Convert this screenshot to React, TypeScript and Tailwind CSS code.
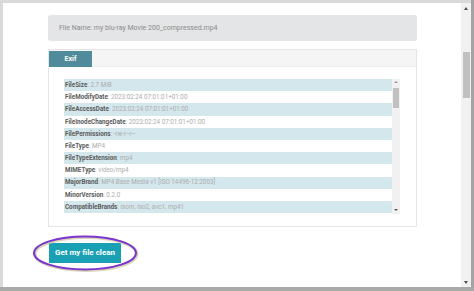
import React from "react";

const rows: [string, string][] = [
  ["FileSize", "2.7 MiB"],
  ["FileModifyDate", "2023:02:24 07:01:01+01:00"],
  ["FileAccessDate", "2023:02:24 07:01:01+01:00"],
  ["FileInodeChangeDate", "2023:02:24 07:01:01+01:00"],
  ["FilePermissions", "-rw-r--r--"],
  ["FileType", "MP4"],
  ["FileTypeExtension", "mp4"],
  ["MIMEType", "video/mp4"],
  ["MajorBrand", "MP4 Base Media v1 [ISO 14496-12:2003]"],
  ["MinorVersion", "0.2.0"],
  ["CompatibleBrands", "isom, iso2, avc1, mp41"],
];

export default function App() {
  return (
    <div
      className="w-[474px] h-[291px] overflow-hidden flex flex-col bg-[#d9d9d9]"
      style={{ fontFamily: "Roboto, 'Liberation Sans', sans-serif" }}
    >
      <div className="flex flex-1 min-h-0 pt-[3px] pl-[3px] border-r-[3px] border-r-[#a3a3a3]">
        {/* page area */}
        <div className="flex-1 bg-white pl-[45px] pt-[12px] flex flex-col">
          <div className="w-[369px] h-[26px] rounded-[3px] bg-[#e4e5e7] flex items-center pl-[11px] text-[7px] text-[#8a8a8a]">
            File Name: my blu-ray Movie 200_compressed.mp4
          </div>
          <div className="mt-[8px] w-[369px] h-[178px] border border-[#e6e6e6] flex flex-col">
            <div className="h-[17px] bg-[#f5f5f5] border-b border-[#ececec] flex">
              <div className="w-[43px] h-[16px] mt-[1px] bg-[#4f8b9b] text-white text-[7px] font-bold flex items-center justify-center">
                Exif
              </div>
            </div>
            <div className="flex-1 pt-[12px] pl-[15px] pr-[16px]">
              <div className="flex h-[135px]">
                <div className="flex-1 flex flex-col">
                  {rows.map(([k, v], i) => (
                    <div
                      key={k}
                      className={`h-[12.2px] flex items-center pl-[1px] text-[6.3px] leading-none ${
                        i % 2 === 0 ? "bg-[#d4e7ec]" : "bg-white"
                      }`}
                    >
                      <span className="font-bold text-[#5a5a5a]">{k}</span>
                      <span className="text-[#acacac]">: {v}</span>
                    </div>
                  ))}
                </div>
                <div className="w-[8px] bg-[#f1f1f1] flex flex-col items-center">
                  <div className="mt-[2px] w-0 h-0 border-l-[2px] border-r-[2px] border-b-[2px] border-l-transparent border-r-transparent border-b-[#999]" />
                  <div className="mt-[5px] w-[6px] h-[20px] bg-[#c1c1c1]" />
                  <div className="flex-1" />
                  <div className="mb-[3px] w-0 h-0 border-l-[2px] border-r-[2px] border-t-[2px] border-l-transparent border-r-transparent border-t-[#555]" />
                </div>
              </div>
            </div>
          </div>
          <div className="mt-[16px] relative w-[72px]">
            <div className="ml-[1px] w-[72px] h-[20px] bg-[#1aa0b5] text-white text-[8px] font-bold flex items-center justify-center">
              Get my file clean
            </div>
            <svg
              className="absolute left-[-16px] top-[-9px] overflow-visible"
              width="106"
              height="38"
              viewBox="0 0 106 38"
            >
              <ellipse cx="54" cy="20" rx="51" ry="16.5" fill="none" stroke="#c9c59a" strokeWidth="3" opacity="0.7" />
              <ellipse cx="53" cy="19" rx="51" ry="16.5" fill="none" stroke="#7c34cf" strokeWidth="2" />
            </svg>
          </div>
        </div>
        {/* page scrollbar */}
        <div className="w-[10px] bg-[#f1f1f1] flex flex-col items-center">
          <div className="mt-[4px] w-0 h-0 border-l-[2.5px] border-r-[2.5px] border-b-[3px] border-l-transparent border-r-transparent border-b-[#505050]" />
          <div className="mt-[42px] w-[7px] h-[46px] bg-[#c1c1c1]" />
          <div className="flex-1" />
          <div className="mb-[3px] w-0 h-0 border-l-[2.5px] border-r-[2.5px] border-t-[3px] border-l-transparent border-r-transparent border-t-[#505050]" />
        </div>
      </div>
      <div className="h-[4px] bg-[#a9a9a9]" />
    </div>
  );
}
